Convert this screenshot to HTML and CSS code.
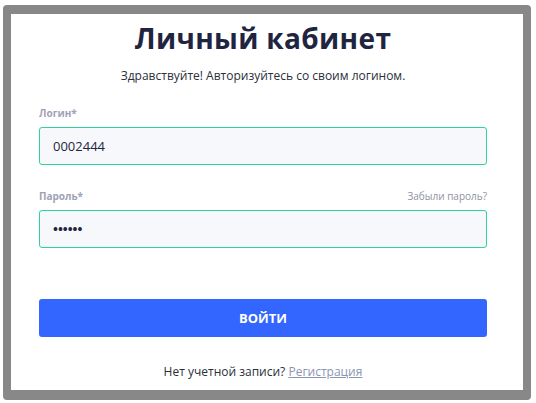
FILE: index.html
```html
<!DOCTYPE html>
<html lang="ru">
<head>
<meta charset="utf-8">
<link rel="stylesheet" href="styles.css">
</head>
<body>
<div class="frame">
  <div class="card">
    <h1 class="title">Личный кабинет</h1>
    <p class="subtitle">Здравствуйте! Авторизуйтесь со своим логином.</p>
    <form class="form">
      <div class="field">
        <div class="label-row"><label class="label">Логин*</label></div>
        <div class="input">0002444</div>
      </div>
      <div class="field field-pass">
        <div class="label-row"><label class="label">Пароль*</label><a class="forgot">Забыли пароль?</a></div>
        <div class="input input-pass">••••••</div>
      </div>
      <button class="submit" type="button">ВОЙТИ</button>
    </form>
    <p class="footer">Нет учетной записи? <a class="reg">Регистрация</a></p>
  </div>
</div>
</body>
</html>
```
FILE: styles.css
```css
* { box-sizing: border-box; }
html, body { margin: 0; padding: 0; background: #fff; }
body { width: 536px; height: 403px; overflow: hidden; font-family: "Open Sans", "Noto Sans", sans-serif; }
.frame {
  margin: 5px 5px 3px 3px;
  height: 395px;
  border: 8px solid #888888;
  border-top-width: 9px;
  border-bottom-width: 10px;
  border-radius: 4px;
  background: #fff;
}
.card {
  padding: 0 36px 0 28px;
  display: flex;
  flex-direction: column;
}
.title {
  margin: 6px 0 0;
  font-size: 28px;
  line-height: 36px;
  font-weight: 700;
  color: #1f2540;
  text-align: center;
  letter-spacing: 0.35px;
}
.subtitle {
  margin: 12px 0 0;
  font-size: 12px;
  line-height: 16px;
  color: #2b2f3a;
  text-align: center;
}
.form { display: flex; flex-direction: column; margin-top: 22px; }
.field { display: flex; flex-direction: column; }
.field-pass { margin-top: 24px; }
.label-row { display: flex; justify-content: space-between; align-items: center; height: 14px; margin-bottom: 7px; }
.label { font-size: 10px; font-weight: 700; color: #9da3b4; }
.forgot { font-size: 10px; color: #8d93a3; }
.input {
  height: 38px;
  border: 1.5px solid #2ed39b;
  border-radius: 3px;
  background: #f7f8fc;
  padding: 0 13px;
  display: flex;
  align-items: center;
  font-size: 13px;
  color: #1f2540;
}
.input-pass { font-size: 13px; letter-spacing: 0; font-weight: 700; }
.submit {
  margin-top: 51px;
  height: 38px;
  border: none;
  border-radius: 3px;
  background: #3366ff;
  color: #fff;
  font-family: inherit;
  font-size: 13px;
  font-weight: 700;
}
.footer {
  margin: 27px 0 0;
  font-size: 12px;
  line-height: 16px;
  color: #2b2f3a;
  text-align: center;
}
.reg { color: #8b95b3; text-decoration: underline; }
```
